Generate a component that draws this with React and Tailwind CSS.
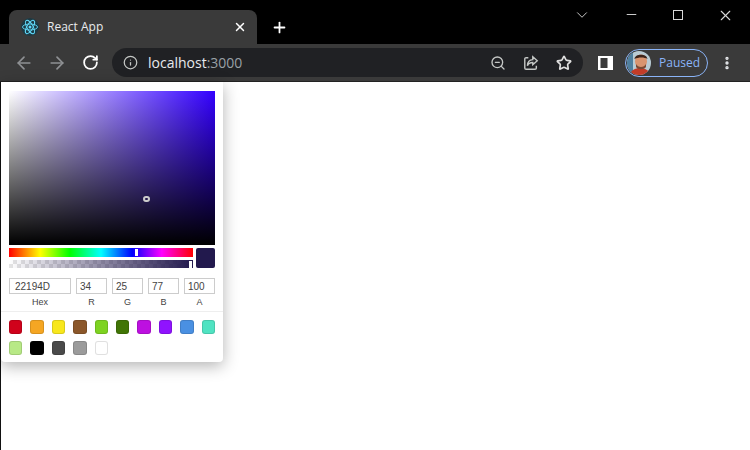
import { ArrowLeft, ArrowRight, ChevronDown, Info, Minus, MoreVertical, Plus, RotateCw, Star, X, ZoomOut } from "lucide-react";

const presets = ["#D0021B", "#F5A623", "#F8E71C", "#8B572A", "#7ED321", "#417505", "#BD10E0", "#9013FE", "#4A90E2", "#50E3C2", "#B8E986", "#000000", "#4A4A4A", "#9B9B9B", "#FFFFFF"];

const fields = [
    { label: "Hex", value: "22194D", width: "w-[62px]" },
    { label: "R", value: "34", width: "w-[31px]" },
    { label: "G", value: "25", width: "w-[31px]" },
    { label: "B", value: "77", width: "w-[31px]" },
    { label: "A", value: "100", width: "w-[31px]" },
];

const ReactLogo = () => (
    <svg width="18" height="18" viewBox="0 0 24 24" fill="none" stroke="#61dafb" strokeWidth="1.2">
        <rect width="24" height="24" rx="12" fill="#1d3a44" stroke="none" />
        <circle cx="12" cy="12" r="2" fill="#61dafb" stroke="none" />
        <ellipse cx="12" cy="12" rx="10" ry="4" />
        <ellipse cx="12" cy="12" rx="10" ry="4" transform="rotate(60 12 12)" />
        <ellipse cx="12" cy="12" rx="10" ry="4" transform="rotate(120 12 12)" />
    </svg>
);

const ShareIcon = () => (
    <svg width="16" height="16" viewBox="0 0 18 18" fill="none" stroke="#c4c7c5" strokeWidth="1.6">
        <path d="M6 3H3.500C2.700 3 2 3.700 2 4.500v10c0 .8.7 1.500 1.500 1.500h10c.8 0 1.500-.7 1.500-1.500V12" />
        <path d="M11 2l5 4.500-5 4.500V8.500C8 8.500 6 9.500 5 12c0-4 2.500-6.500 6-6.800z" />
    </svg>
);

const SidePanelIcon = () => (
    <svg width="15" height="14" viewBox="0 0 15 14">
        <rect width="15" height="14" fill="#fff" />
        <rect x="2.500" y="2" width="7" height="10" fill="#3a3a3a" />
    </svg>
);

const Avatar = () => (
    <svg width="24" height="24" viewBox="0 0 24 24">
        <clipPath id="avatar-clip">
            <circle cx="12" cy="12" r="12" />
        </clipPath>
        <g clipPath="url(#avatar-clip)">
            <rect width="24" height="24" fill="#b9cbd4" />
            <rect width="6" height="24" fill="#4f7f9e" />
            <path d="M3 24c1-5 5-7 10-7s9 2 10 7z" fill="#c23c28" />
            <ellipse cx="14" cy="10.500" rx="6" ry="7" fill="#d9946f" />
            <path d="M7.500 8c0-5 12-6 13 0-3-2-9-2-13 0z" fill="#3d241a" />
            <path d="M9 13c2 4 8 4 10 0v3c-2 3-8 3-10 0z" fill="#7a4a35" />
        </g>
    </svg>
);

const ColorPicker = () => (
    <div className="w-[222px] h-[280px] bg-white rounded-b-[4px] pl-2 pt-[9px] shadow-[0_4px_16px_rgba(0,0,0,0.3)] font-['Liberation_Sans',sans-serif]">
        <div className="relative w-[206px] h-[154px] bg-[linear-gradient(to_top,#000,transparent),linear-gradient(to_right,#fff,#3300ff)]">
            <div className="absolute left-[134px] top-[105px] w-[7px] h-[6px] rounded-full border-2 border-[#ccc]" />
        </div>

        <div className="flex gap-[3px] mt-[3px] w-[206px]">
            <div className="flex flex-col gap-[3px] w-[184px]">
                <div className="relative h-[9px] bg-[linear-gradient(to_right,#f00_0%,#ff0_17%,#0f0_33%,#0ff_50%,#00f_67%,#f0f_83%,#f00_100%)]">
                    <div className="absolute left-[126px] top-px w-[3px] h-[7px] bg-white" />
                </div>
                <div className="relative h-[8px] bg-[linear-gradient(to_right,rgba(34,25,77,0),#22194d),repeating-conic-gradient(#e4e4e4_0%_25%,#fff_0%_50%)] bg-[length:auto,8px_8px]">
                    <div className="absolute left-[180px] top-px w-[3px] h-[7px] bg-white" />
                </div>
            </div>
            <div className="w-[19px] h-[20px] rounded-[2px] bg-[#22194d]" />
        </div>

        <div className="flex gap-[5px] mt-[10px] w-[206px]">
            {fields.map((field) => (
                <div key={field.label} className={field.width}>
                    <input
                        type="text"
                        readOnly
                        value={field.value}
                        className={`block ${field.width} h-4 border border-[#ccc] text-[10px] text-[#444] ${field.label === "Hex" ? "pl-[5px]" : "pl-[3px]"} focus:outline-none`}
                    />
                    <div className="text-center text-[9px] leading-3 text-[#444] mt-[2px]">{field.label}</div>
                </div>
            ))}
        </div>

        <div className="border-t border-[#eee] -ml-2 w-[222px] mt-[3px] pt-[8px] px-2">
            <div className="grid grid-cols-10 gap-x-2 gap-y-[7px] w-[206px]">
                {presets.map((color) => (
                    <div key={color} style={{ backgroundColor: color }} className="h-[14px] rounded-[3px] shadow-[inset_0_0_0_1px_rgba(0,0,0,0.12)]" />
                ))}
            </div>
        </div>
    </div>
);

const App = () => {
    return (
        <div className="w-[750px] h-[450px] overflow-hidden flex flex-col bg-white font-['Open_Sans',sans-serif]">
            <div className="h-[44px] bg-black flex items-end pl-[9px] shrink-0">
                <div className="w-[248px] h-[34px] bg-[#3a3a3a] rounded-t-[8px] flex items-center pl-[12px] pr-[10px] text-white">
                    <ReactLogo />
                    <span className="ml-[8px] text-[12px] text-[#e8eaed]">React App</span>
                    <X size={14} strokeWidth={2.5} className="ml-auto" />
                </div>
                <div className="h-[34px] flex items-center ml-[14px] text-white">
                    <Plus size={17} strokeWidth={2.5} />
                </div>
                <div className="ml-auto h-full flex items-start pt-[6px] text-[#d8d8d8]">
                    <ChevronDown size={18} strokeWidth={1.2} className="mr-[33px]" />
                    <Minus size={15} strokeWidth={1.5} className="mr-[34px] mt-[1px]" />
                    <div className="w-[10px] h-[10px] border border-[#d8d8d8] mr-[34px] mt-[4px]" />
                    <X size={17} strokeWidth={1.5} className="mr-[16px] mt-[1px]" />
                </div>
            </div>

            <div className="h-[38px] bg-[#3a3a3a] border-b border-[#222] flex items-center shrink-0 pl-[14px]">
                <ArrowLeft size={20} className="text-[#8f9194]" />
                <ArrowRight size={20} className="text-[#8f9194] ml-[13px]" />
                <RotateCw size={17} strokeWidth={2.500} className="text-white ml-[15px]" />
                <div className="w-[471px] h-[29px] ml-[13px] rounded-full bg-[#202124] flex items-center pl-[11px] pr-[11px]">
                    <Info size={15} className="text-[#c4c7c5]" />
                    <span className="ml-[10px] text-[14px] font-medium text-[#e8eaed]">localhost<span className="font-normal text-[#9aa0a6]">:3000</span></span>
                    <ZoomOut size={16} className="ml-auto text-[#c4c7c5]" />
                    <span className="ml-[17px]"><ShareIcon /></span>
                    <Star size={16} strokeWidth={2.5} className="ml-[17px] text-[#e0e0e0]" />
                </div>
                <div className="ml-[15px]"><SidePanelIcon /></div>
                <div className="w-[83px] h-[28px] ml-[12px] rounded-full border border-[#8ab4f8] flex items-center pl-[1px]">
                    <Avatar />
                    <span className="ml-[8px] text-[12px] text-[#8ab4f8]">Paused</span>
                </div>
                <MoreVertical size={16} strokeWidth={3} className="text-[#e8eaed] ml-[11px]" />
            </div>

            <div className="flex-1 border-l border-[#111]">
                <ColorPicker />
            </div>
        </div>
    );
};

export default App;
